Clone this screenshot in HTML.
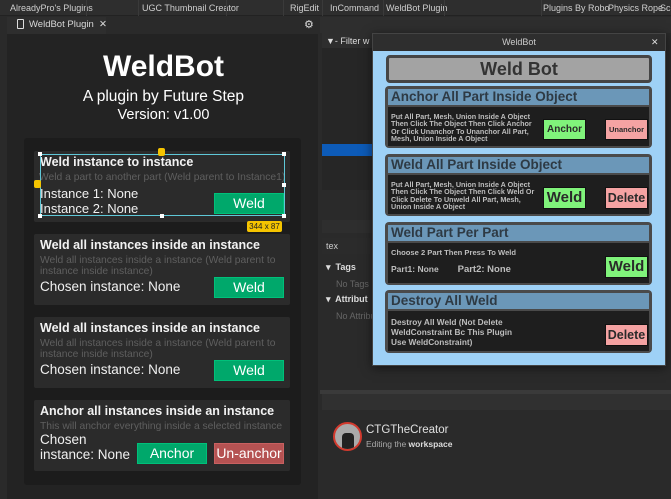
<!DOCTYPE html>
<html><head><meta charset="utf-8"><style>
*{margin:0;padding:0;box-sizing:border-box}
body{width:671px;height:499px;overflow:hidden;background:#2a2a2a;font-family:"Liberation Sans",sans-serif;position:relative}
.a{position:absolute}
.t{color:#cfcfcf;font-size:9px;top:3px}
.card{position:absolute;left:34px;width:256px;background:#2b2b2b;border-radius:2px}
.ct{position:absolute;left:6px;color:#f2f2f2;font-weight:bold;font-size:12.5px;white-space:nowrap}
.cd{position:absolute;left:6px;color:#5f5f5f;font-size:10.3px;line-height:11px;white-space:nowrap}
.cl{position:absolute;left:6px;color:#f0f0f0;font-size:13.5px;white-space:nowrap}
.gb{position:absolute;background:#00a86b;color:#fff;font-size:14px;text-align:center;border:1px solid #00c07a}
.sec{position:absolute;left:385px;width:267px;background:#4a4a4a;border-radius:4px}
.sh{position:absolute;left:3px;right:3px;top:3px;height:16px;background:#6b97b8;color:#2e3a44;font-weight:bold;font-size:13.5px;padding-left:3px;line-height:16px;white-space:nowrap}
.sb{position:absolute;left:3px;right:3px;top:21px;bottom:2px;background:#1e1e1e}
.st{position:absolute;left:3px;color:#bdbdbd;font-weight:bold;font-size:7.2px;line-height:7.3px;white-space:nowrap}
.btn{position:absolute;color:#2a2a2a;font-weight:bold;text-align:center;border:1px solid #111}
</style></head><body>
<div class="a" style="left:0;top:0;width:671px;height:16px;background:#2e2e2e;border-bottom:1px solid #222"></div>
<div class="a t" style="left:10px">AlreadyPro's Plugins</div>
<div class="a" style="left:86px;top:0;width:1px;height:16px;background:#3a3a3a"></div>
<div class="a" style="left:138px;top:0;width:1px;height:16px;background:#3a3a3a"></div>
<div class="a t" style="left:142px">UGC Thumbnail Creator</div>
<div class="a" style="left:226px;top:0;width:1px;height:16px;background:#3a3a3a"></div>
<div class="a" style="left:283px;top:0;width:1px;height:16px;background:#3a3a3a"></div>
<div class="a t" style="left:290px">RigEdit</div>
<div class="a" style="left:322px;top:0;width:1px;height:16px;background:#3a3a3a"></div>
<div class="a t" style="left:330px">InCommand</div>
<div class="a" style="left:383px;top:0;width:1px;height:16px;background:#3a3a3a"></div>
<div class="a t" style="left:386px">WeldBot Plugin</div>
<div class="a" style="left:444px;top:0;width:1px;height:16px;background:#3a3a3a"></div>
<div class="a" style="left:541px;top:0;width:1px;height:16px;background:#3a3a3a"></div>
<div class="a t" style="left:543px">Plugins By Robo</div>
<div class="a t" style="left:608px">Physics Rope</div>
<div class="a t" style="left:660px">Scr</div>

<div class="a" style="left:0;top:17px;width:320px;height:482px;background:#2a2a2a"></div>
<div class="a" style="left:7px;top:17px;width:99px;height:17px;background:#2e2e2e"></div>
<div class="a" style="left:17px;top:19px;width:7px;height:10px;border:1px solid #ddd;border-radius:1px"></div>
<div class="a" style="left:29px;top:19px;color:#d8d8d8;font-size:9.5px">WeldBot Plugin&nbsp; ✕</div>
<div class="a" style="left:304px;top:18px;color:#ddd;font-size:11px">⚙</div>
<div class="a" style="left:7px;top:34px;width:311px;height:465px;background:#232323"></div>
<div class="a" style="left:82px;width:163px;text-align:center;color:#fff;font-weight:bold;font-size:30px;top:50px">WeldBot</div>
<div class="a" style="left:62px;width:203px;text-align:center;top:88px;color:#fff;font-size:15.5px">A plugin by Future Step</div>
<div class="a" style="left:62px;width:203px;text-align:center;top:107px;color:#fff;font-size:14.5px">Version: v1.00</div>
<div class="a" style="left:24px;top:138px;width:277px;height:347px;background:#1c1c1c;border-radius:3px"></div>

<div class="card" style="top:151px;height:71px">
 <div class="ct" style="top:4px">Weld instance to instance</div>
 <div class="cd" style="top:21px;left:5px">Weld a part to another part (Weld parent to Instance1)</div>
 <div class="cl" style="top:35px;font-size:13px">Instance 1: None</div>
 <div class="cl" style="top:50px;font-size:13px">Instance 2: None</div>
</div>
<div class="gb" style="left:214px;top:193px;width:70px;height:21px;line-height:19px">Weld</div>
<div class="a" style="left:40px;top:154px;width:245px;height:62px;border:1px solid #5fc8d8"></div>
<div class="a" style="left:38px;top:152px;width:4px;height:4px;background:#fff"></div>
<div class="a" style="left:282px;top:152px;width:4px;height:4px;background:#fff"></div>
<div class="a" style="left:38px;top:214px;width:4px;height:4px;background:#fff"></div>
<div class="a" style="left:282px;top:214px;width:4px;height:4px;background:#fff"></div>
<div class="a" style="left:160px;top:214px;width:4px;height:4px;background:#fff"></div>
<div class="a" style="left:282px;top:183px;width:4px;height:4px;background:#fff"></div>
<div class="a" style="left:158px;top:148px;width:7px;height:8px;background:#f5c400;border-radius:2px"></div>
<div class="a" style="left:34px;top:180px;width:7px;height:8px;background:#f5c400;border-radius:2px"></div>
<div class="a" style="left:247px;top:221px;width:35px;height:11px;background:#f5c400;border-radius:2px;font-size:8px;line-height:11px;text-align:center;color:#222">344 x 87</div>

<div class="card" style="top:234px;height:71px">
 <div class="ct" style="top:4px">Weld all instances inside an instance</div>
 <div class="cd" style="top:21px">Weld all instances inside a instance (Weld parent to<br>instance inside instance)</div>
 <div class="cl" style="top:45px">Chosen instance: None</div>
</div>
<div class="gb" style="left:214px;top:277px;width:70px;height:21px;line-height:19px">Weld</div>

<div class="card" style="top:317px;height:71px">
 <div class="ct" style="top:4px">Weld all instances inside an instance</div>
 <div class="cd" style="top:21px">Weld all instances inside a instance (Weld parent to<br>instance inside instance)</div>
 <div class="cl" style="top:45px">Chosen instance: None</div>
</div>
<div class="gb" style="left:214px;top:360px;width:70px;height:21px;line-height:19px">Weld</div>

<div class="card" style="top:400px;height:71px">
 <div class="ct" style="top:4px">Anchor all instances inside an instance</div>
 <div class="cd" style="top:21px">This will anchor everything inside a selected instance</div>
 <div class="cl" style="top:32px;line-height:15px">Chosen<br>instance: None</div>
</div>
<div class="gb" style="left:137px;top:443px;width:70px;height:21px;line-height:19px">Anchor</div>
<div class="gb" style="left:214px;top:443px;width:70px;height:21px;line-height:19px;background:#b55252;border-color:#c86060">Un-anchor</div>

<div class="a" style="left:320px;top:17px;width:351px;height:16px;background:#2e2e2e"></div>
<div class="a" style="left:322px;top:33px;width:60px;height:15px;background:#2e2e2e"></div>
<div class="a" style="left:326px;top:36px;color:#ddd;font-size:9px">▼- Filter w</div>
<div class="a" style="left:322px;top:48px;width:52px;height:142px;background:#262626"></div>
<div class="a" style="left:322px;top:144px;width:52px;height:12px;background:#0d5bb8"></div>
<div class="a" style="left:322px;top:220px;width:52px;height:13px;background:#2e2e2e"></div>
<div class="a" style="left:322px;top:238px;width:52px;height:16px;background:#2b2b2b"></div>
<div class="a" style="left:326px;top:241px;color:#ccc;font-size:9px">tex</div>
<div class="a" style="left:326px;top:262px;color:#ddd;font-size:9px;font-weight:bold">▾&nbsp; Tags</div>
<div class="a" style="left:336px;top:279px;color:#666;font-size:9px">No Tags h</div>
<div class="a" style="left:326px;top:294px;color:#ddd;font-size:9px;font-weight:bold">▾&nbsp; Attribut</div>
<div class="a" style="left:336px;top:311px;color:#666;font-size:9px">No Attribu</div>
<div class="a" style="left:320px;top:390px;width:351px;height:4px;background:#3a3a3a"></div>
<div class="a" style="left:322px;top:394px;width:349px;height:16px;background:#303030"></div>
<div class="a" style="left:333px;top:422px;width:29px;height:29px;border:2px solid #d23a2e;border-radius:50%;background:#aaa;overflow:hidden">
 <div class="a" style="left:7px;top:9px;width:12px;height:16px;background:#222;border-radius:4px 4px 0 0"></div></div>
<div class="a" style="left:366px;top:424px;color:#e0e0e0;font-size:11.5px">CTGTheCreator</div>
<div class="a" style="left:366px;top:439px;color:#aaa;font-size:8.5px">Editing the <b style="color:#ddd">workspace</b></div>

<div class="a" style="left:372px;top:33px;width:294px;height:333px;background:#9ed1f6;border:1px solid #444;box-shadow:0 2px 10px rgba(0,0,0,.5)"></div>
<div class="a" style="left:373px;top:34px;width:292px;height:17px;background:#2e2e2e;color:#ccc;font-size:9px;text-align:center;line-height:17px">WeldBot</div>
<div class="a" style="left:651px;top:37px;color:#ddd;font-size:9px">✕</div>
<div class="a" style="left:386px;top:55px;width:266px;height:28px;background:#a3a3a3;border:3px solid #454545;border-radius:4px;text-align:center;color:#333;font-weight:bold;font-size:18px;line-height:22px">Weld Bot</div>

<div class="sec" style="top:86px;height:62px"><div class="sh">Anchor All Part Inside Object</div><div class="sb">
 <div class="st" style="top:6px">Put All Part, Mesh, Union Inside A Object<br>Then Click The Object Then Click Anchor<br>Or Click Unanchor To Unanchor All Part,<br>Mesh, Union Inside A Object</div></div></div>
<div class="btn" style="left:543px;top:119px;width:43px;height:21px;background:#80f37b;font-size:10px;line-height:19px">Anchor</div>
<div class="btn" style="left:605px;top:119px;width:43px;height:21px;background:#f5a3a3;font-size:7.5px;line-height:19px">Unanchor</div>

<div class="sec" style="top:154px;height:62px"><div class="sh">Weld All Part Inside Object</div><div class="sb">
 <div class="st" style="top:6px">Put All Part, Mesh, Union Inside A Object<br>Then Click The Object Then Click Weld Or<br>Click Delete To Unweld All Part, Mesh,<br>Union Inside A Object</div></div></div>
<div class="btn" style="left:543px;top:187px;width:43px;height:22px;background:#80f37b;font-size:15px;line-height:20px">Weld</div>
<div class="btn" style="left:605px;top:187px;width:43px;height:22px;background:#f5a3a3;font-size:12.5px;line-height:20px">Delete</div>

<div class="sec" style="top:222px;height:63px"><div class="sh">Weld Part Per Part</div><div class="sb">
 <div class="st" style="top:6px;font-size:7.6px">Choose 2 Part Then Press To Weld</div>
 <div class="st" style="top:22px;font-size:8.5px;line-height:9px">Part1: None&nbsp;&nbsp;&nbsp;&nbsp;&nbsp;&nbsp;&nbsp; <span style="font-size:9.5px">Part2: None</span></div></div></div>
<div class="btn" style="left:605px;top:256px;width:43px;height:22px;background:#80f37b;font-size:15px;line-height:20px">Weld</div>

<div class="sec" style="top:290px;height:63px"><div class="sh">Destroy All Weld</div><div class="sb">
 <div class="st" style="top:6px;font-size:8.3px;line-height:10px">Destroy All Weld (Not Delete<br>WeldConstraint Bc This Plugin<br>Use WeldConstraint)</div></div></div>
<div class="btn" style="left:605px;top:324px;width:43px;height:22px;background:#f5a3a3;font-size:12.5px;line-height:20px">Delete</div>
</body></html>
